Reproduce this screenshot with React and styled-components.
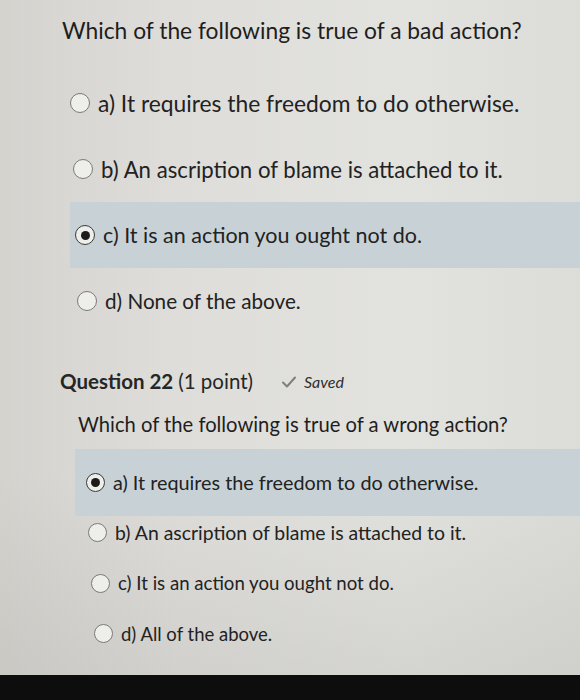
import styled, { createGlobalStyle } from 'styled-components';

//LOGIC
const first = {
  title: 'Which of the following is true of a bad action?',
  options: [
    { label: 'a) It requires the freedom to do otherwise.', shift: 0, size: 22.8 },
    { label: 'b) An ascription of blame is attached to it.', shift: 3, size: 22.2 },
    { label: 'c) It is an action you ought not do.', shift: 5, size: 21.5, checked: true },
    { label: 'd) None of the above.', shift: 7, size: 20.7 },
  ],
};

const second = {
  title: 'Which of the following is true of a wrong action?',
  options: [
    { label: 'a) It requires the freedom to do otherwise.', shift: 0, size: 19.8, checked: true },
    { label: 'b) An ascription of blame is attached to it.', shift: 2, size: 19.4 },
    { label: 'c) It is an action you ought not do.', shift: 5, size: 18.6 },
    { label: 'd) All of the above.', shift: 8, size: 18.5 },
  ],
};

//MARKUP
export default function App() {
  return (
    <>
      <Global />
      <Screen>
        <Block>
          <Title>{first.title}</Title>
          <List $left={70}>
            {first.options.map((o) => (
              <Option key={o.label} $height={66} $checked={o.checked}>
                <Pad $shift={o.shift} />
                <Radio $size={20} $checked={o.checked} />
                <Label $size={o.size}>{o.label}</Label>
              </Option>
            ))}
          </List>
        </Block>

        <Block $top={34}>
          <Header>
            <Strong>Question 22</Strong>
            <Points>(1 point)</Points>
            <Saved>
              <svg width="16" height="14" viewBox="0 0 16 14">
                <path d="M2 7.5 L6 11.5 L14 2.5" fill="none" stroke="#7d8082" strokeWidth="2" strokeLinecap="round" strokeLinejoin="round" />
              </svg>
              Saved
            </Saved>
          </Header>
          <Prompt>{second.title}</Prompt>
          <List $left={75} $top={20}>
            {second.options.map((o) => (
              <Option key={o.label} $height={50.5} $checked={o.checked} $bleed={o.checked ? 8 : 0}>
                <Pad $shift={o.shift + 11} />
                <Radio $size={19} $checked={o.checked} />
                <Label $size={o.size}>{o.label}</Label>
              </Option>
            ))}
          </List>
        </Block>
      </Screen>
      <Bezel />
    </>
  );
}

//STYLE
const Global = createGlobalStyle`
  html, body {
    margin: 0;
    padding: 0;
    background: #111;
  }
  body {
    font-family: Lato, "Open Sans", sans-serif;
    color: #262626;
    overflow: hidden;
  }
`;

const Screen = styled.div`
  height: 675px;
  overflow: hidden;
  background:
    linear-gradient(180deg, rgba(255, 255, 255, 0) 70%, rgba(150, 150, 145, 0.18) 100%),
    linear-gradient(90deg, #d4d3ce 0%, #dedddA 30%, #e2e2de 70%, #dcdcd8 100%);
`;

const Block = styled.section`
  padding-top: ${(p) => p.$top || 14}px;
`;

const Title = styled.h2`
  margin: 0 0 0 62px;
  font-size: 22.8px;
  font-weight: 400;
  line-height: 32px;
  color: #1e1e1e;
`;

const List = styled.div`
  display: flex;
  flex-direction: column;
  margin-left: ${(p) => p.$left}px;
  margin-top: ${(p) => p.$top || 24}px;
`;

const Option = styled.div`
  display: flex;
  align-items: center;
  height: ${(p) => p.$height}px;
  margin: ${(p) => -(p.$bleed || 0)}px 0;
  padding: ${(p) => p.$bleed || 0}px 0;
  background: ${(p) => (p.$checked ? '#c8d2d6' : 'transparent')};
`;

const Pad = styled.span`
  flex: none;
  width: ${(p) => p.$shift}px;
`;

const Radio = styled.span`
  flex: none;
  box-sizing: border-box;
  width: ${(p) => p.$size}px;
  height: ${(p) => p.$size}px;
  border-radius: 50%;
  border: 1.5px solid ${(p) => (p.$checked ? '#3a3a3a' : '#7a7a7a')};
  background: #eeeeeb;
  display: grid;
  place-items: center;
  margin-right: 8px;

  &::after {
    content: '';
    display: ${(p) => (p.$checked ? 'block' : 'none')};
    width: 9px;
    height: 9px;
    border-radius: 50%;
    background: #1c1c1c;
  }
`;

const Label = styled.span`
  font-size: ${(p) => p.$size}px;
  color: #222;
  white-space: nowrap;
`;

const Header = styled.div`
  display: flex;
  align-items: baseline;
  margin-left: 60px;
  font-size: 20.5px;
  line-height: 26px;
`;

const Strong = styled.span`
  font-weight: 700;
`;

const Points = styled.span`
  margin-left: 5px;
`;

const Saved = styled.span`
  display: inline-flex;
  align-items: center;
  gap: 7px;
  margin-left: 28px;
  font-size: 16px;
  font-style: italic;
  color: #2e2e2e;
`;

const Prompt = styled.p`
  margin: 16px 0 0 78px;
  font-size: 20.2px;
  line-height: 26px;
  color: #1e1e1e;
`;

const Bezel = styled.div`
  height: 25px;
  background: #0d0d0d;
`;
